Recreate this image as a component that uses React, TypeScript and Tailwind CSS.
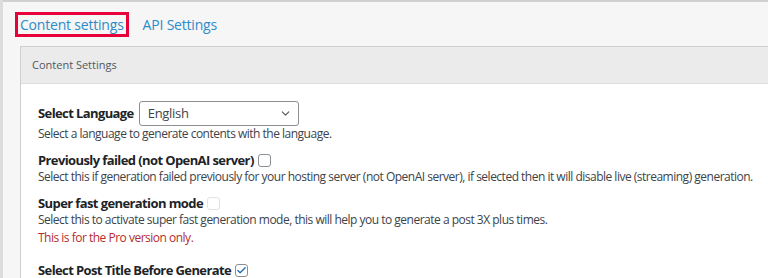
import { ChevronDown, Check } from "lucide-react";

function Box({ checked = false, faint = false }: { checked?: boolean; faint?: boolean }) {
  return (
    <span
      className={`ml-[4px] inline-flex h-[13px] w-[13px] items-center justify-center rounded-[3px] border bg-white ${
        faint ? "border-[#e2e2e2]" : "border-[#8c8f94]"
      }`}
    >
      {checked && <Check className="h-[11px] w-[11px] text-[#2271b1]" strokeWidth={3} />}
    </span>
  );
}

export default function App() {
  return (
    <div className="h-[278px] w-[768px] overflow-hidden bg-[#dcdcde] pl-[3px] font-['Open_Sans',sans-serif] text-[#3c434a]">
      <div className="h-full border-t-2 border-[#d0d0d0] bg-[#f6f6f6] pl-[17px]">
        <div className="flex h-[44px] items-center gap-[14px] text-[14px] tracking-[-0.2px] text-[#2e8bc9]">
          <span className="-ml-[5px] border-[3px] border-[#e8003a] px-[2px] leading-[19px]">Content settings</span>
          <span>API Settings</span>
        </div>
        <div className="border border-r-0 border-[#cfcfcf] bg-white">
          <div className="flex h-[37px] items-center border-b border-[#dcdcdc] bg-[#ebebeb] pl-[11px] text-[11px] text-[#50575e]">
            Content Settings
          </div>
          <div className="pl-[17px] pt-[17px] text-[12px] tracking-[-0.5px]">
            <div className="flex items-center">
              <span className="text-[13px] font-bold tracking-[-0.6px] text-[#1d2327]">Select Language</span>
              <div className="ml-[5px] flex h-[25px] w-[160px] items-center justify-between rounded-[3px] border border-[#8c8f94] pl-[8px] pr-[6px] text-[13px] tracking-[-0.3px]">
                <span>English</span>
                <ChevronDown className="h-[13px] w-[13px] text-[#555]" />
              </div>
            </div>
            <div className="leading-[16px]">Select a language to generate contents with the language.</div>
            <div className="mt-[10px] flex items-center text-[13px] font-bold leading-[16px] tracking-[-0.6px] text-[#1d2327]">
              Previously failed (not OpenAI server)
              <Box />
            </div>
            <div className="mt-[1px] leading-[16px] whitespace-nowrap">
              Select this if generation failed previously for your hosting server (not OpenAI server), if selected then it will disable live (streaming) generation.
            </div>
            <div className="mt-[10px] flex items-center text-[13px] font-bold leading-[16px] tracking-[-0.6px] text-[#1d2327]">
              Super fast generation mode
              <Box faint />
            </div>
            <div className="mt-[1px] leading-[16px]">
              Select this to activate super fast generation mode, this will help you to generate a post 3X plus times.
            </div>
            <div className="leading-[20px] text-[#b32d2e]">This is for the Pro version only.</div>
            <div className="mt-[14px] flex items-center text-[13px] font-bold leading-[16px] tracking-[-0.6px] text-[#1d2327]">
              Select Post Title Before Generate
              <Box checked />
            </div>
          </div>
        </div>
      </div>
    </div>
  );
}
